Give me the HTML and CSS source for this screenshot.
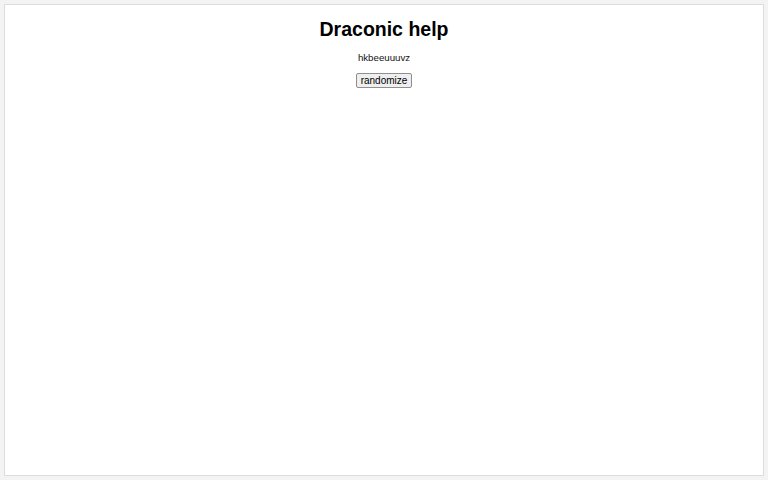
FILE: index.html
```html
<!DOCTYPE html>
<html>
<head>
<meta charset="utf-8">
<title>Draconic help</title>
<link rel="stylesheet" href="styles.css">
</head>
<body>
<main class="panel">
  <h1 class="title">Draconic help</h1>
  <p class="word">hkbeeuuuvz</p>
  <button class="btn" type="button">randomize</button>
</main>
</body>
</html>
```
FILE: styles.css
```css
html, body {
  margin: 0;
  height: 100%;
  background: #f3f3f3;
}
body {
  padding: 4px;
  box-sizing: border-box;
  font-family: "Liberation Sans", Arial, sans-serif;
}
.panel {
  height: 100%;
  box-sizing: border-box;
  background: #fff;
  border: 1px solid #dcdcdc;
  display: flex;
  flex-direction: column;
  align-items: center;
  padding-top: 15px;
}
.title {
  margin: 0;
  font-size: 19.5px;
  font-weight: bold;
  color: #000;
  line-height: 18px;
}
.word {
  margin: 14px 0 0;
  font-size: 9.7px;
  line-height: 12px;
  color: #111;
}
.btn {
  margin-top: 9px;
  font-family: "Liberation Sans", Arial, sans-serif;
  font-size: 10px;
  line-height: 11px;
  padding: 1px 4px;
  color: #000;
  background: #efefef;
  border: 1px solid #8f8f8f;
  border-radius: 2px;
}
```
